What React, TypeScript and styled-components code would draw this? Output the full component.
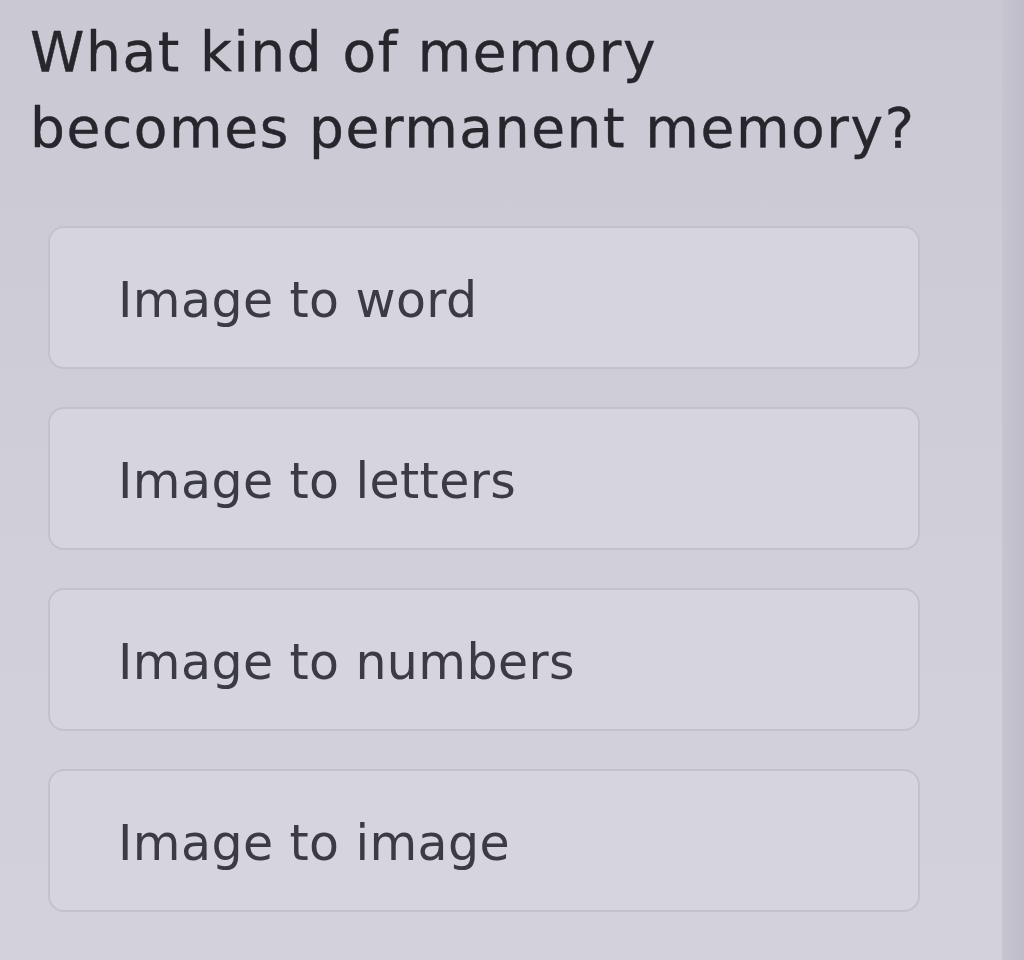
import styled, { createGlobalStyle } from "styled-components";

const GlobalStyle = createGlobalStyle`
  html, body {
    margin: 0;
    padding: 0;
    background: #cccbd5;
  }
  * {
    box-sizing: border-box;
  }
`;

const Screen = styled.div`
  display: flex;
  width: 1024px;
  min-height: 960px;
  background: linear-gradient(180deg, #cac9d3 0%, #d1d0da 60%, #d3d2dc 100%);
  font-family: "DejaVu Sans", "Open Sans", sans-serif;
`;

const Panel = styled.main`
  flex: 1;
  padding: 14px 0 0 30px;
`;

const EdgeStrip = styled.div`
  width: 22px;
  background: linear-gradient(90deg, #c6c5d0 0%, #bdbcc8 100%);
`;

const Question = styled.h1`
  margin: 0 0 60px;
  font-size: 55px;
  line-height: 76px;
  font-weight: 500;
  color: #26262c;
  letter-spacing: 1.6px;
  -webkit-text-stroke: 0.4px #26262c;
`;

const Options = styled.ul`
  list-style: none;
  margin: 0;
  padding: 0 0 0 18px;
  width: 890px;
  display: flex;
  flex-direction: column;
  gap: 38px;
`;

const Option = styled.li`
  height: 143px;
  display: flex;
  align-items: center;
  padding: 6px 0 0 68px;
  border: 2px solid #c3c2cc;
  border-radius: 16px;
  background: #d6d5de;
  font-size: 49px;
  color: #3b3b43;
  letter-spacing: 0.4px;
`;

const answers = [
  "Image to word",
  "Image to letters",
  "Image to numbers",
  "Image to image",
];

export default function App() {
  return (
    <>
      <GlobalStyle />
      <Screen>
        <Panel>
          <Question>
            What kind of memory
            <br />
            becomes permanent memory?
          </Question>
          <Options>
            {answers.map((a) => (
              <Option key={a}>{a}</Option>
            ))}
          </Options>
        </Panel>
        <EdgeStrip />
      </Screen>
    </>
  );
}
